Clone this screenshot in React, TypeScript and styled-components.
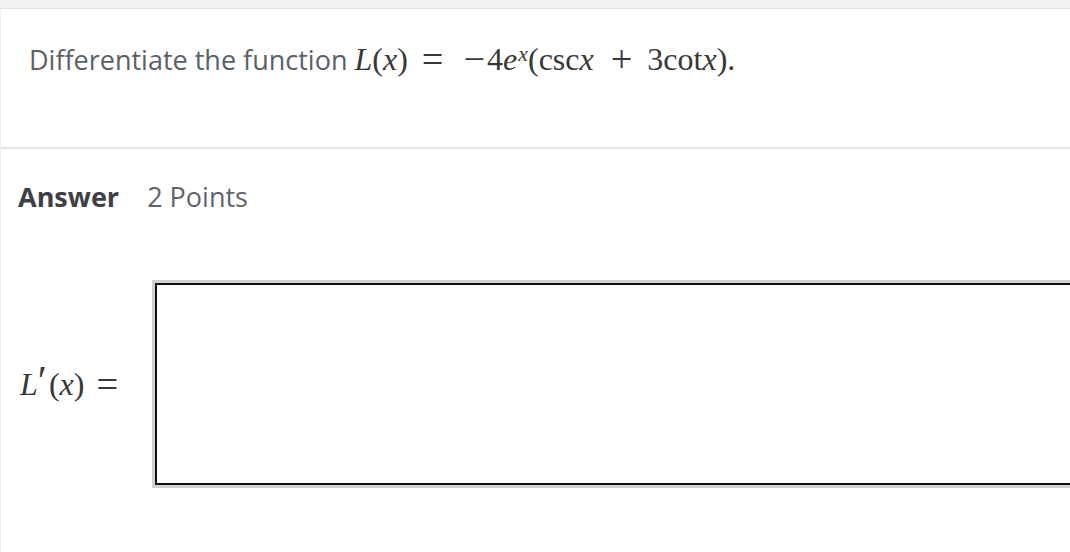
import React from "react";
import styled, { createGlobalStyle } from "styled-components";

const GlobalStyle = createGlobalStyle`
  html, body {
    margin: 0;
    padding: 0;
    background: #ffffff;
    overflow: hidden;
  }
  body {
    font-family: "Open Sans", "Noto Sans", sans-serif;
  }
`;

const Page = styled.div`
  width: 1070px;
  height: 552px;
  overflow: hidden;
  background: #fff;
`;

const TopBand = styled.div`
  height: 8px;
  background: #f1f2f3;
  border-bottom: 1px solid #e3e4e5;
`;

const Sheet = styled.div`
  border-left: 1px solid #f0f0f0;
  height: 543px;
`;

const QuestionCard = styled.div`
  height: 140px;
  box-sizing: border-box;
  padding: 30px 0 0 28px;
  border-bottom: 2px solid #e4e4e4;
`;

const Prompt = styled.p`
  margin: 0;
  font-size: 27px;
  line-height: 40px;
  color: #5b6167;
  white-space: nowrap;
`;

const Math = styled.span`
  font-family: "Liberation Serif", "Times New Roman", serif;
  font-size: 32px;
  color: #383838;
`;

const Var = styled.i`
  font-style: italic;
`;

const Op = styled.span<{ $left?: number; $right?: number }>`
  font-size: 1.2em;
  line-height: 0;
  vertical-align: -0.06em;
  margin-left: ${(p) => p.$left ?? 14}px;
  margin-right: ${(p) => p.$right ?? 14}px;
`;

const Prime = styled.span`
  display: inline-block;
  font-size: 1.3em;
  line-height: 0;
  margin-right: 2px;
`;

const Sup = styled.sup`
  font-size: 0.68em;
  font-style: italic;
  vertical-align: 0.42em;
  line-height: 0;
  margin-left: 1px;
`;

const AnswerSection = styled.section`
  padding: 28px 0 0 17px;
`;

const AnswerHeader = styled.div`
  display: flex;
  align-items: baseline;
  gap: 28px;
  height: 40px;
  line-height: 40px;
`;

const AnswerLabel = styled.span`
  font-size: 27px;
  font-weight: 700;
  color: #3d4146;
`;

const Points = styled.span`
  font-size: 27px;
  color: #5f656b;
`;

const InputRow = styled.div`
  display: flex;
  align-items: center;
  margin-top: 66px;
  gap: 30px;
`;

const RowLabel = styled(Math)`
  width: 105px;
  white-space: nowrap;
  flex: none;
  padding-left: 2px;
`;

const AnswerBox = styled.div`
  flex: none;
  width: 1000px;
  height: 198px;
  background: #fff;
  border: 2px solid #111;
  box-shadow: 0 0 0 3px #d2d2d2;
`;

export default function App() {
  return (
    <Page>
      <GlobalStyle />
      <TopBand />
      <Sheet>
        <QuestionCard>
          <Prompt>
            Differentiate the function{" "}
            <Math>
              <Var>L</Var>(<Var>x</Var>)<Op>=</Op>
              <Op $left={6} $right={2}>−</Op>4<Var>e</Var>
              <Sup>x</Sup>(csc<Var>x</Var>
              <Op $left={17} $right={15}>+</Op>3cot<Var>x</Var>).
            </Math>
          </Prompt>
        </QuestionCard>
        <AnswerSection>
          <AnswerHeader>
            <AnswerLabel>Answer</AnswerLabel>
            <Points>2 Points</Points>
          </AnswerHeader>
          <InputRow>
            <RowLabel>
              <Var>L</Var>
              <Prime>′</Prime>(<Var>x</Var>)<Op $left={12}>=</Op>
            </RowLabel>
            <AnswerBox />
          </InputRow>
        </AnswerSection>
      </Sheet>
    </Page>
  );
}
